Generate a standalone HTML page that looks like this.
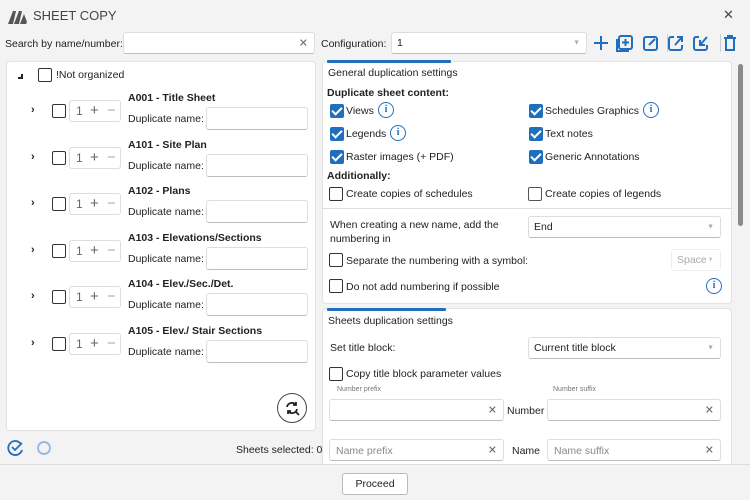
<!DOCTYPE html>
<html><head><meta charset="utf-8"><style>
*{box-sizing:border-box;margin:0;padding:0}
body{width:750px;height:500px;background:#f3f3f3;font-family:"Liberation Sans",sans-serif;font-size:10.5px;color:#222;position:relative;overflow:hidden}
.a{position:absolute}
.card{position:absolute;background:#fff;border:1px solid #e2e2e2;border-radius:4px}
.cb{position:absolute;width:14px;height:14px;border:1px solid #333;border-radius:2px;background:#fff}
.ck{position:absolute;width:14px;height:14px;background:#1f6fbd;border-radius:2px}
.ck:after{content:"";position:absolute;left:4px;top:1px;width:4px;height:8px;border:solid #fff;border-width:0 2px 2px 0;transform:rotate(45deg)}
.inp{position:absolute;background:#fff;border:1px solid #ddd;border-bottom-color:#bbb;border-radius:3px}
.x{position:absolute;right:6px;top:50%;transform:translateY(-50%);color:#666;font-size:11px}
.info{position:absolute;width:16px;height:16px;border:1.6px solid #1f6fbd;border-radius:50%;color:#1f6fbd;font-weight:bold;font-size:10px;text-align:center;line-height:13px;font-family:"Liberation Serif",serif}
.t{position:absolute;white-space:nowrap}
.b{font-weight:bold}
.sp{position:absolute;width:52px;height:22px;border:1px solid #ddd;border-radius:3px;background:#fff;color:#666;font-size:12px}
.chev{position:absolute;font-weight:bold;font-size:11px}
.dd{position:absolute;right:6px;top:50%;color:#aaa;font-size:7px;transform:translateY(-50%)}
</style></head><body>
<svg class="a" style="left:8px;top:8px" width="20" height="16" viewBox="0 0 20 16"><path d="M0 16 L5 3 L8 3 L5 16Z M6 16 L11 3 L14 3 L11 16Z M12 16 L16 6 L19 14 L18 16Z" fill="#555"/></svg>
<div class="t" style="left:33px;top:8px;font-size:13px;color:#444">SHEET COPY</div>
<div class="t" style="left:723px;top:7px;font-size:13px;color:#444">✕</div>
<div class="t" style="left:5px;top:38px">Search by name/number:</div>
<div class="inp" style="left:123px;top:32px;width:192px;height:22px"><span class="x">✕</span></div>
<div class="t" style="left:321px;top:38px">Configuration:</div>
<div class="inp" style="left:391px;top:32px;width:196px;height:22px"><span class="t" style="left:5px;top:4px">1</span><span class="dd">▼</span></div>
<svg class="a" style="left:592px;top:33px" width="150" height="20" viewBox="0 0 150 20" fill="none" stroke="#1f6fbd" stroke-width="2">
<path d="M9 3v14M2 10h14"/>
<rect x="27" y="3" width="13" height="13" rx="2"/><path d="M25 6v12h12M33.5 6v7M30 9.5h7"/>
<rect x="52" y="4" width="13" height="13" rx="2"/><path d="M57 12l6-6"/>
<path d="M82 4h-3a2 2 0 0 0-2 2v9a2 2 0 0 0 2 2h9a2 2 0 0 0 2-2v-3M83 12l7-8M85 4h5v5"/>
<path d="M107 4h-3a2 2 0 0 0-2 2v9a2 2 0 0 0 2 2h9a2 2 0 0 0 2-2v-3M115 4l-7 8M108 7v5h5"/>
<path d="M132 5h12M136 5V3h4v2M134 5v12h8V5"/>
</svg>
<div class="a" style="left:667px;top:34px;width:1px;height:18px;background:#ccc"></div>
<div class="a" style="left:720px;top:34px;width:1px;height:18px;background:#ccc"></div>
<div class="card" style="left:6px;top:61px;width:310px;height:370px"></div>
<div class="a" style="left:18px;top:74px;width:5px;height:5px;border-right:2px solid #222;border-bottom:2px solid #222"></div>
<div class="cb" style="left:38px;top:68px"></div>
<div class="t" style="left:56px;top:69px">!Not organized</div>

<div class="t b" style="left:128px;top:92px">A001 - Title Sheet</div>
<div class="chev" style="left:31px;top:104px">›</div><div class="cb" style="left:52px;top:104px"></div>
<div class="sp" style="left:69px;top:100px"><span class="t" style="left:6px;top:3px">1</span><span class="t" style="left:20px;top:1px;font-size:15px">+</span><span class="t" style="left:37px;top:1px;font-size:15px;color:#aaa">−</span></div>
<div class="t" style="left:128px;top:113px">Duplicate name:</div><div class="inp" style="left:206px;top:107px;width:102px;height:23px"></div>

<div class="t b" style="left:128px;top:139px">A101 - Site Plan</div>
<div class="chev" style="left:31px;top:151px">›</div><div class="cb" style="left:52px;top:151px"></div>
<div class="sp" style="left:69px;top:147px"><span class="t" style="left:6px;top:3px">1</span><span class="t" style="left:20px;top:1px;font-size:15px">+</span><span class="t" style="left:37px;top:1px;font-size:15px;color:#aaa">−</span></div>
<div class="t" style="left:128px;top:160px">Duplicate name:</div><div class="inp" style="left:206px;top:154px;width:102px;height:23px"></div>

<div class="t b" style="left:128px;top:185px">A102 - Plans</div>
<div class="chev" style="left:31px;top:197px">›</div><div class="cb" style="left:52px;top:197px"></div>
<div class="sp" style="left:69px;top:193px"><span class="t" style="left:6px;top:3px">1</span><span class="t" style="left:20px;top:1px;font-size:15px">+</span><span class="t" style="left:37px;top:1px;font-size:15px;color:#aaa">−</span></div>
<div class="t" style="left:128px;top:206px">Duplicate name:</div><div class="inp" style="left:206px;top:200px;width:102px;height:23px"></div>

<div class="t b" style="left:128px;top:232px">A103 - Elevations/Sections</div>
<div class="chev" style="left:31px;top:244px">›</div><div class="cb" style="left:52px;top:244px"></div>
<div class="sp" style="left:69px;top:240px"><span class="t" style="left:6px;top:3px">1</span><span class="t" style="left:20px;top:1px;font-size:15px">+</span><span class="t" style="left:37px;top:1px;font-size:15px;color:#aaa">−</span></div>
<div class="t" style="left:128px;top:253px">Duplicate name:</div><div class="inp" style="left:206px;top:247px;width:102px;height:23px"></div>

<div class="t b" style="left:128px;top:278px">A104 - Elev./Sec./Det.</div>
<div class="chev" style="left:31px;top:290px">›</div><div class="cb" style="left:52px;top:290px"></div>
<div class="sp" style="left:69px;top:286px"><span class="t" style="left:6px;top:3px">1</span><span class="t" style="left:20px;top:1px;font-size:15px">+</span><span class="t" style="left:37px;top:1px;font-size:15px;color:#aaa">−</span></div>
<div class="t" style="left:128px;top:299px">Duplicate name:</div><div class="inp" style="left:206px;top:293px;width:102px;height:23px"></div>

<div class="t b" style="left:128px;top:325px">A105 - Elev./ Stair Sections</div>
<div class="chev" style="left:31px;top:337px">›</div><div class="cb" style="left:52px;top:337px"></div>
<div class="sp" style="left:69px;top:333px"><span class="t" style="left:6px;top:3px">1</span><span class="t" style="left:20px;top:1px;font-size:15px">+</span><span class="t" style="left:37px;top:1px;font-size:15px;color:#aaa">−</span></div>
<div class="t" style="left:128px;top:346px">Duplicate name:</div><div class="inp" style="left:206px;top:340px;width:102px;height:23px"></div>

<div class="a" style="left:277px;top:393px;width:30px;height:30px;border:1px solid #444;border-radius:50%;background:#fff"></div>
<svg class="a" style="left:283px;top:399px" width="18" height="18" viewBox="0 0 18 18" fill="none" stroke="#222" stroke-width="1.8"><path d="M4 8a5 5 0 0 1 9-2M14 10a5 5 0 0 1-9 2M13 3v3h-3M5 15v-3h3M12 12l4 4"/></svg>
<svg class="a" style="left:6px;top:438px" width="50" height="20" viewBox="0 0 50 20" fill="none" stroke="#1f6fbd" stroke-width="1.8"><path d="M15 6a7 7 0 1 0 1 6"/><path d="M6 9l3 3 7-7"/><circle cx="38" cy="10" r="6" stroke="#8fb6e0"/></svg>
<div class="t" style="left:236px;top:444px">Sheets selected: 0</div>
<div class="card" style="left:322px;top:61px;width:410px;height:243px"></div>
<div class="a" style="left:327px;top:60px;width:124px;height:3px;background:#1f6fbd;border-radius:1px"></div>
<div class="t" style="left:328px;top:67px">General duplication settings</div>
<div class="t b" style="left:327px;top:87px">Duplicate sheet content:</div>
<div class="ck" style="left:330px;top:104px"></div><div class="t" style="left:346px;top:105px">Views</div><div class="info" style="left:378px;top:102px">i</div>
<div class="ck" style="left:330px;top:127px"></div><div class="t" style="left:346px;top:128px">Legends</div><div class="info" style="left:390px;top:125px">i</div>
<div class="ck" style="left:330px;top:150px"></div><div class="t" style="left:346px;top:151px">Raster images (+ PDF)</div>
<div class="ck" style="left:529px;top:104px"></div><div class="t" style="left:545px;top:105px">Schedules Graphics</div><div class="info" style="left:643px;top:102px">i</div>
<div class="ck" style="left:529px;top:127px"></div><div class="t" style="left:545px;top:128px">Text notes</div>
<div class="ck" style="left:529px;top:150px"></div><div class="t" style="left:545px;top:151px">Generic Annotations</div>
<div class="t b" style="left:327px;top:170px">Additionally:</div>
<div class="cb" style="left:329px;top:187px"></div><div class="t" style="left:346px;top:188px">Create copies of schedules</div>
<div class="cb" style="left:528px;top:187px;border-color:#555"></div><div class="t" style="left:545px;top:188px">Create copies of legends</div>
<div class="a" style="left:323px;top:208px;width:408px;height:1px;background:#ddd"></div>
<div class="t" style="left:330px;top:218px;line-height:14px">When creating a new name, add the<br>numbering in</div>
<div class="inp" style="left:528px;top:216px;width:193px;height:22px"><span class="t" style="left:5px;top:4px">End</span><span class="dd">▼</span></div>
<div class="cb" style="left:329px;top:253px"></div><div class="t" style="left:346px;top:255px">Separate the numbering with a symbol:</div>
<div class="inp" style="left:671px;top:249px;width:50px;height:22px;border-color:#eee"><span class="t" style="left:5px;top:4px;color:#aaa">Space</span><span class="dd" style="color:#ccc">▼</span></div>
<div class="cb" style="left:329px;top:279px"></div><div class="t" style="left:346px;top:281px">Do not add numbering if possible</div>
<div class="info" style="left:706px;top:278px">i</div>
<div class="card" style="left:322px;top:308px;width:410px;height:160px"></div>
<div class="a" style="left:327px;top:308px;width:119px;height:3px;background:#1f6fbd;border-radius:1px"></div>
<div class="t" style="left:328px;top:315px">Sheets duplication settings</div>
<div class="t" style="left:330px;top:342px">Set title block:</div>
<div class="inp" style="left:528px;top:337px;width:193px;height:22px"><span class="t" style="left:5px;top:4px">Current title block</span><span class="dd">▼</span></div>
<div class="cb" style="left:329px;top:367px"></div><div class="t" style="left:346px;top:368px">Copy title block parameter values</div>
<div class="t" style="left:337px;top:386px;font-size:7px;color:#777">Number prefix</div>
<div class="t" style="left:553px;top:386px;font-size:7px;color:#777">Number suffix</div>
<div class="inp" style="left:329px;top:399px;width:175px;height:22px"><span class="x">✕</span></div>
<div class="t" style="left:507px;top:405px">Number</div>
<div class="inp" style="left:547px;top:399px;width:174px;height:22px"><span class="x">✕</span></div>
<div class="inp" style="left:329px;top:439px;width:175px;height:22px"><span class="t" style="left:6px;top:5px;color:#888">Name prefix</span><span class="x">✕</span></div>
<div class="t" style="left:512px;top:445px">Name</div>
<div class="inp" style="left:547px;top:439px;width:174px;height:22px"><span class="t" style="left:6px;top:5px;color:#888">Name suffix</span><span class="x">✕</span></div>
<div class="a" style="left:738px;top:64px;width:5px;height:162px;background:#8a8a8a;border-radius:3px"></div>
<div class="a" style="left:0;top:464px;width:750px;height:36px;background:#f3f3f3;border-top:1px solid #ddd"></div>
<div class="a" style="left:342px;top:473px;width:66px;height:22px;border:1px solid #bbb;border-radius:3px;background:#fff;text-align:center;line-height:20px">Proceed</div>
</body></html>
